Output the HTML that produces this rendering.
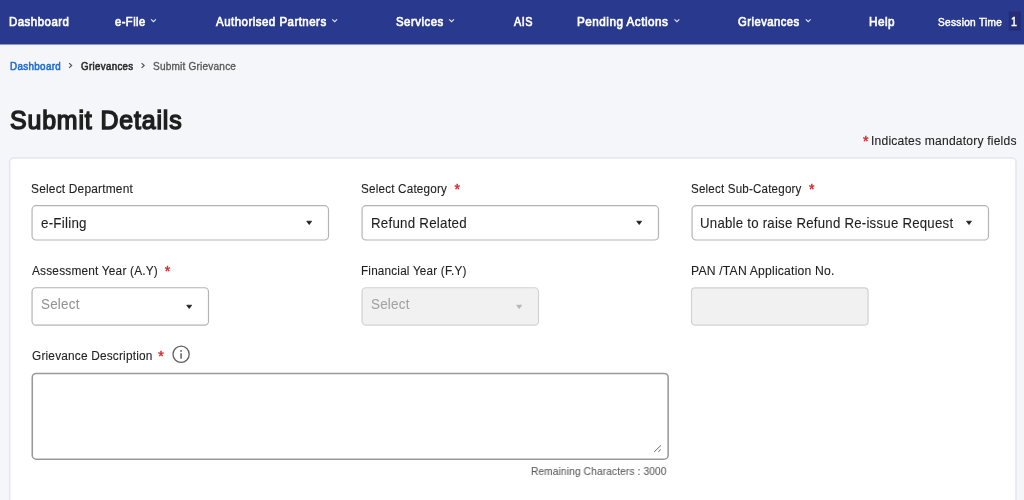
<!DOCTYPE html>
<html lang="en">
<head>
<meta charset="utf-8">
<title>Submit Details</title>
<style>
*{box-sizing:border-box;margin:0;padding:0}
html,body{width:1024px;height:500px;overflow:hidden}
body{background:#f5f6fa;font-family:"Liberation Sans",sans-serif;color:#1f1f1f;position:relative}
#pg{position:absolute;left:0;top:0;width:1024px;height:500px;overflow:hidden;will-change:transform}
#shapes{position:absolute;left:0;top:0;width:1024px;height:500px}
.t{position:absolute;display:block;line-height:20px;height:20px;white-space:nowrap;font-weight:normal;font-style:normal;text-decoration:none;transform-origin:0 0}
.nav{position:absolute;left:0;top:0;width:1024px;height:44px;background:#29398d}
.navb{position:absolute;left:0;top:44px;width:1024px;height:1px;background:#8f98c4}
</style>
</head>
<body>
<div id="pg">
<div class="nav"></div><div class="navb"></div>
<svg id="shapes" width="1024" height="500" viewBox="0 0 1024 500">
  <!-- session timer digit box -->
  <rect x="1008.7" y="11.5" width="12.2" height="19.1" fill="#232e76"/>
  <!-- nav chevrons -->
  <g fill="none" stroke="#ffffff" stroke-opacity="0.88" stroke-width="1.1">
    <path d="M151.1 19.3 L153.5 21.7 L155.9 19.3"/>
    <path d="M332.3 19.3 L334.7 21.7 L337.1 19.3"/>
    <path d="M449.2 19.3 L451.6 21.7 L454.0 19.3"/>
    <path d="M674.5 19.3 L676.9 21.7 L679.3 19.3"/>
    <path d="M805.8 19.3 L808.2 21.7 L810.6 19.3"/>
  </g>
  <!-- breadcrumb chevrons -->
  <g fill="none" stroke="#4d4d4d" stroke-width="1.1">
    <path d="M69.1 63.1 L71.7 65.5 L69.1 67.9"/>
    <path d="M141.6 63.1 L144.2 65.5 L141.6 67.9"/>
  </g>
  <!-- card -->
  <rect x="9.7" y="158" width="1006.3" height="360" rx="4" fill="#ffffff" stroke="#e4e5f1" stroke-width="1.5"/>
  <!-- row 1 selects -->
  <g fill="#ffffff" stroke="#b4b4b4" stroke-width="1.2">
    <rect x="32.06" y="205.68" width="296.44" height="34.32" rx="4"/>
    <rect x="362.06" y="205.68" width="296.44" height="34.32" rx="4"/>
    <rect x="692.06" y="205.68" width="296.44" height="34.32" rx="4"/>
    <rect x="32.06" y="287.74" width="176.44" height="37.46" rx="4"/>
  </g>
  <g fill="#f1f1f1" stroke="#d2d2d2" stroke-width="1.2">
    <rect x="362.06" y="287.74" width="176.44" height="37.46" rx="4"/>
    <rect x="691.5" y="287.9" width="176.58" height="37.14" rx="3.5"/>
  </g>
  <!-- dropdown arrows -->
  <g fill="#1c1c1c" stroke="#1c1c1c" stroke-width="0.7" stroke-linejoin="round">
    <path d="M306.7 221.2 H311.7 L309.2 224.6 Z"/>
    <path d="M636.7 221.2 H641.7 L639.2 224.6 Z"/>
    <path d="M966.5 221.2 H971.5 L969.0 224.6 Z"/>
    <path d="M186.7 305.2 H191.7 L189.2 308.6 Z"/>
  </g>
  <path d="M516.7 305.2 H521.7 L519.2 308.6 Z" fill="#b3b3b3" stroke="#b3b3b3" stroke-width="0.7" stroke-linejoin="round"/>
  <!-- info icon -->
  <g fill="none" stroke="#606060">
    <circle cx="181.1" cy="354.3" r="8.1" stroke-width="1.3"/>
    <path d="M181.1 353.2 V358.7" stroke-width="1.5"/>
  </g>
  <circle cx="181.1" cy="350.9" r="0.95" fill="#606060"/>
  <!-- textarea -->
  <rect x="32.26" y="373.46" width="635.9" height="85.74" rx="4" fill="#ffffff" stroke="#999999" stroke-width="1.55"/>
  <path d="M654.2 451.9 L661 445.3 M658.3 451.9 L660.9 449.4" fill="none" stroke="#6a6a6a" stroke-width="1"/>
</svg>
<header>
<nav aria-label="Main menu">
<a class="t" style="left:9.44px;top:12.00px;font-size:13px;color:#fff;letter-spacing:0.55px;transform:scaleX(0.8809);-webkit-text-stroke:0.7px #fff;">Dashboard</a>
<a class="t" style="left:114.89px;top:12.00px;font-size:13px;color:#fff;letter-spacing:0.55px;transform:scaleX(0.8576);-webkit-text-stroke:0.7px #fff;">e-File</a>
<a class="t" style="left:215.54px;top:12.00px;font-size:13px;color:#fff;letter-spacing:0.55px;transform:scaleX(0.8826);-webkit-text-stroke:0.7px #fff;">Authorised Partners</a>
<a class="t" style="left:396.13px;top:12.00px;font-size:13px;color:#fff;letter-spacing:0.55px;transform:scaleX(0.8789);-webkit-text-stroke:0.7px #fff;">Services</a>
<a class="t" style="left:513.77px;top:12.00px;font-size:13px;color:#fff;letter-spacing:0.55px;transform:scaleX(0.8337);-webkit-text-stroke:0.7px #fff;">AIS</a>
<a class="t" style="left:577.42px;top:12.00px;font-size:13px;color:#fff;letter-spacing:0.55px;transform:scaleX(0.9005);-webkit-text-stroke:0.7px #fff;">Pending Actions</a>
<a class="t" style="left:738.38px;top:12.00px;font-size:13px;color:#fff;letter-spacing:0.55px;transform:scaleX(0.8655);-webkit-text-stroke:0.7px #fff;">Grievances</a>
<a class="t" style="left:869.42px;top:12.00px;font-size:13px;color:#fff;letter-spacing:0.55px;transform:scaleX(0.9018);-webkit-text-stroke:0.7px #fff;">Help</a>
</nav>
<div class="session">
<span class="t" style="left:937.87px;top:12.00px;font-size:11px;color:#fff;letter-spacing:0.35px;transform:scaleX(0.9144);-webkit-text-stroke:0.5px #fff;">Session Time</span>
<span class="t" style="left:1011.06px;top:12.00px;font-size:13.5px;color:#fff;transform:scaleX(0.7923);-webkit-text-stroke:0.5px #fff;">1</span>
</div>
</header>
<nav aria-label="Breadcrumb">
<a class="t" style="left:9.64px;top:56.00px;font-size:10.6px;color:#1c6bd6;letter-spacing:0.4px;transform:scaleX(0.9226);-webkit-text-stroke:0.55px #1c6bd6;">Dashboard</a>
<a class="t" style="left:80.62px;top:56.00px;font-size:10.6px;color:#2a2a2a;letter-spacing:0.4px;transform:scaleX(0.9128);-webkit-text-stroke:0.55px #2a2a2a;">Grievances</a>
<span class="t" style="left:152.86px;top:56.00px;font-size:10.6px;color:#555;letter-spacing:0.2px;transform:scaleX(0.9516);-webkit-text-stroke:0.3px #555;">Submit Grievance</span>
</nav>
<main>
<h1 class="t" style="left:9.91px;top:109.60px;font-size:26px;color:#1f1f1f;letter-spacing:0.9px;transform:scaleX(0.9573);-webkit-text-stroke:1.5px #1f1f1f;">Submit Details</h1>
<p class="note"><span class="t" style="left:862.90px;top:130.70px;font-size:14px;color:#d9252a;-webkit-text-stroke:0.45px #d9252a;">*</span><span class="t" style="left:871.08px;top:130.50px;font-size:12.5px;color:#222;letter-spacing:0.2px;transform:scaleX(0.9684);-webkit-text-stroke:0.1px #222;">Indicates mandatory fields</span></p>
<form>
<div class="field"><label class="t" style="left:31.37px;top:179.10px;font-size:12.3px;color:#222;letter-spacing:0.2px;transform:scaleX(0.9694);-webkit-text-stroke:0.1px #222;">Select Department</label><span class="t" style="left:40.63px;top:213.40px;font-size:14.2px;color:#1f1f1f;letter-spacing:0.25px;transform:scaleX(0.9426);-webkit-text-stroke:0.1px #1f1f1f;">e-Filing</span></div>
<div class="field"><label class="t" style="left:361.37px;top:179.10px;font-size:12.3px;color:#222;letter-spacing:0.2px;transform:scaleX(0.9510);-webkit-text-stroke:0.1px #222;">Select Category</label><span class="t" style="left:454.50px;top:178.60px;font-size:14px;color:#d9252a;-webkit-text-stroke:0.45px #d9252a;">*</span><span class="t" style="left:370.51px;top:213.40px;font-size:14.2px;color:#1f1f1f;letter-spacing:0.25px;transform:scaleX(0.9395);-webkit-text-stroke:0.1px #1f1f1f;">Refund Related</span></div>
<div class="field"><label class="t" style="left:691.08px;top:179.10px;font-size:12.3px;color:#222;letter-spacing:0.2px;transform:scaleX(0.9429);-webkit-text-stroke:0.1px #222;">Select Sub-Category</label><span class="t" style="left:809.10px;top:178.60px;font-size:14px;color:#d9252a;-webkit-text-stroke:0.45px #d9252a;">*</span><span class="t" style="left:700.22px;top:213.40px;font-size:14.2px;color:#1f1f1f;letter-spacing:0.25px;transform:scaleX(0.9327);-webkit-text-stroke:0.1px #1f1f1f;">Unable to raise Refund Re-issue Request</span></div>
<div class="field"><label class="t" style="left:31.85px;top:261.30px;font-size:12.3px;color:#222;letter-spacing:0.2px;transform:scaleX(0.9645);-webkit-text-stroke:0.1px #222;">Assessment Year (A.Y)</label><span class="t" style="left:164.70px;top:260.80px;font-size:14px;color:#d9252a;-webkit-text-stroke:0.45px #d9252a;">*</span><span class="t" style="left:40.68px;top:293.70px;font-size:14.2px;color:#959595;letter-spacing:0.25px;transform:scaleX(0.9429);-webkit-text-stroke:0.1px #959595;">Select</span></div>
<div class="field"><label class="t" style="left:360.90px;top:261.30px;font-size:12.3px;color:#222;letter-spacing:0.2px;transform:scaleX(0.9540);-webkit-text-stroke:0.1px #222;">Financial Year (F.Y)</label><span class="t" style="left:370.68px;top:293.70px;font-size:14.2px;color:#a3a3a3;letter-spacing:0.25px;transform:scaleX(0.9429);-webkit-text-stroke:0.1px #a3a3a3;">Select</span></div>
<div class="field"><label class="t" style="left:690.86px;top:261.30px;font-size:12.3px;color:#222;letter-spacing:0.2px;transform:scaleX(0.9892);-webkit-text-stroke:0.1px #222;">PAN /TAN Application No.</label></div>
<div class="field"><label class="t" style="left:31.67px;top:346.40px;font-size:12.3px;color:#222;letter-spacing:0.2px;transform:scaleX(0.9628);-webkit-text-stroke:0.1px #222;">Grievance Description</label><span class="t" style="left:158.30px;top:346.00px;font-size:14px;color:#d9252a;-webkit-text-stroke:0.45px #d9252a;">*</span><p class="t" style="left:530.88px;top:461.20px;font-size:10.6px;color:#5c5c5c;letter-spacing:0.15px;transform:scaleX(0.9556);-webkit-text-stroke:0.1px #5c5c5c;">Remaining Characters : 3000</p></div>
</form>
</main>
</div>
</body>
</html>
